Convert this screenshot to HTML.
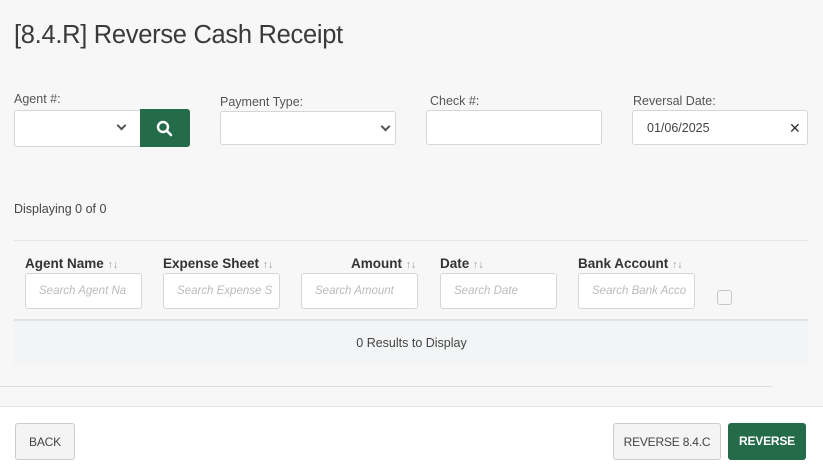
<!DOCTYPE html>
<html><head><style>
*{box-sizing:border-box;margin:0;padding:0}
body{width:823px;height:468px;background:#f7f7f7;font-family:"Liberation Sans",sans-serif;color:#333;position:relative;overflow:hidden}
.a{position:absolute}
h1{position:absolute;left:14px;top:21px;font-size:25.5px;font-weight:normal;color:#3a3a3a;letter-spacing:-0.3px}
.lbl{position:absolute;font-size:12.5px;color:#555}
.inp{position:absolute;background:#fff;border:1px solid #d3d6da;border-radius:3px;height:35px}
.chev{position:absolute;width:7px;height:7px;border-right:2px solid #555;border-bottom:2px solid #555;transform:rotate(45deg)}
.th{position:absolute;top:256px;font-size:13.5px;font-weight:bold;color:#333}
.th span{font-weight:normal;color:#999;font-size:10.5px}
.sf{position:absolute;top:273px;width:117px;height:36px;background:#fff;border:1px solid #d3d6da;border-radius:3px;font-size:11.5px;font-style:italic;color:#bbb;padding:11px 0 0 13px;white-space:nowrap;overflow:hidden}
.btn{position:absolute;top:423px;height:37px;border-radius:3px;font-size:12px;text-align:center;line-height:36px;letter-spacing:-0.2px}
</style></head><body>
<h1>[8.4.R] Reverse Cash Receipt</h1>
<div class="lbl" style="left:14px;top:92px">Agent #:</div>
<div class="inp" style="left:14px;top:110px;width:127px;height:37px;border-radius:3px 0 0 3px"></div>
<div class="chev" style="left:118px;top:122px"></div>
<div class="a" style="left:140px;top:109px;width:50px;height:38px;background:#246b4a;border-radius:0 3px 3px 0">
<svg width="50" height="38"><circle cx="23" cy="18" r="5" stroke="#fff" stroke-width="2.4" fill="none"/><line x1="27" y1="22" x2="31" y2="26" stroke="#fff" stroke-width="2.6" stroke-linecap="round"/></svg></div>
<div class="lbl" style="left:220px;top:95px">Payment Type:</div>
<div class="inp" style="left:220px;top:111px;width:176px;height:34px"></div>
<div class="chev" style="left:382px;top:123px"></div>
<div class="lbl" style="left:430px;top:94px">Check #:</div>
<div class="inp" style="left:426px;top:110px;width:176px"></div>
<div class="lbl" style="left:633px;top:94px">Reversal Date:</div>
<div class="inp" style="left:632px;top:110px;width:176px"></div>
<div class="a" style="left:647px;top:121px;font-size:12.5px;color:#444">01/06/2025</div>
<div class="a" style="left:789px;top:120px;font-size:14px;color:#333">✕</div>
<div class="a" style="left:14px;top:202px;font-size:12.5px;color:#444">Displaying 0 of 0</div>
<div class="a" style="left:14px;top:240px;width:794px;height:1px;background:#e2e4e6"></div>
<div class="th" style="left:25px">Agent Name <span>↑↓</span></div>
<div class="th" style="left:163px">Expense Sheet <span>↑↓</span></div>
<div class="th" style="left:351px">Amount <span>↑↓</span></div>
<div class="th" style="left:440px">Date <span>↑↓</span></div>
<div class="th" style="left:578px">Bank Account <span>↑↓</span></div>
<div class="sf" style="left:25px">Search Agent Na</div>
<div class="sf" style="left:163px">Search Expense S</div>
<div class="sf" style="left:301px">Search Amount</div>
<div class="sf" style="left:440px">Search Date</div>
<div class="sf" style="left:578px">Search Bank Acco</div>
<div class="a" style="left:717px;top:290px;width:15px;height:15px;border:1px solid #c6c8cb;border-radius:3px;background:#f7f7f7"></div>
<div class="a" style="left:14px;top:319px;width:794px;height:2px;background:#dfe1e4"></div>
<div class="a" style="left:14px;top:321px;width:794px;height:44px;background:#f3f4f5"></div>
<div class="a" style="left:0;top:336px;width:823px;text-align:center;font-size:12.5px;color:#444">0 Results to Display</div>
<div class="a" style="left:0;top:386px;width:772px;height:1px;background:#ddd"></div>
<div class="a" style="left:0;top:406px;width:823px;height:62px;background:#fff;border-top:1px solid #e3e3e3"></div>
<div class="btn" style="left:15px;width:60px;background:#f4f4f4;border:1px solid #ccc;color:#444">BACK</div>
<div class="btn" style="left:613px;width:108px;background:#f4f4f4;border:1px solid #ccc;color:#444">REVERSE 8.4.C</div>
<div class="btn" style="left:728px;width:78px;background:#246b4a;color:#fff;font-weight:bold">REVERSE</div>
</body></html>
